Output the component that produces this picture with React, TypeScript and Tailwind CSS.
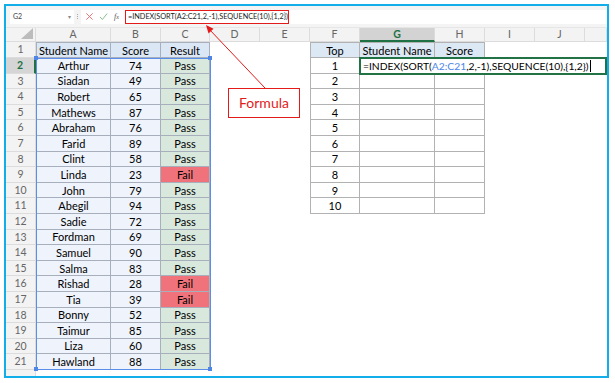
import React from "react";

const data: [string, number, string][] = [
  ["Arthur", 74, "Pass"],
  ["Siadan", 49, "Pass"],
  ["Robert", 65, "Pass"],
  ["Mathews", 87, "Pass"],
  ["Abraham", 76, "Pass"],
  ["Farid", 89, "Pass"],
  ["Clint", 58, "Pass"],
  ["Linda", 23, "Fail"],
  ["John", 79, "Pass"],
  ["Abegil", 94, "Pass"],
  ["Sadie", 72, "Pass"],
  ["Fordman", 69, "Pass"],
  ["Samuel", 90, "Pass"],
  ["Salma", 83, "Pass"],
  ["Rishad", 28, "Fail"],
  ["Tia", 39, "Fail"],
  ["Bonny", 52, "Pass"],
  ["Taimur", 85, "Pass"],
  ["Liza", 60, "Pass"],
  ["Hawland", 88, "Pass"],
];

const GRID =
  "grid grid-cols-[30px_75px_50px_49px_50px_50px_50px_75px_50px_50px_50px_1fr]";

const rh =
  "flex items-center justify-center bg-[#f3f3f3] text-[#666666] text-[10.5px] border-b border-r border-[#dcdcdc]";
const rhActive =
  "flex items-center justify-center bg-[#d5d5d5] text-[#1e7145] font-bold text-[10.5px] border-b border-b-[#dcdcdc] border-r-2 border-r-[#1e7145]";
const cellBase = "flex items-center justify-center text-black whitespace-nowrap overflow-hidden";
const tBodyA = `${cellBase} bg-[#eef3fc] border-l border-r border-b border-[#a7afbd]`;
const tBody = `${cellBase} bg-[#eef3fc] border-r border-b border-[#a7afbd]`;
const tHeadA = `${cellBase} bg-[#dbe7f5] border-l border-r border-b border-t border-[#a7afbd]`;
const tHead = `${cellBase} bg-[#dbe7f5] border-r border-b border-t border-[#a7afbd]`;
const tPass = `${cellBase} bg-[#d8e8dc] border-r border-b border-[#a7afbd]`;
const tFail = `${cellBase} bg-[#f0727a] border-r border-b border-[#a7afbd]`;
const fHeadF = `${cellBase} bg-[#dde8f5] border-l border-r border-b border-t border-[#b2b2b2]`;
const fHead = `${cellBase} bg-[#dde8f5] border-r border-b border-t border-[#b2b2b2]`;
const fBodyF = `${cellBase} bg-white border-l border-r border-b border-[#b2b2b2]`;
const fBody = `${cellBase} bg-white border-r border-b border-[#b2b2b2]`;

const colHeads = ["A", "B", "C", "D", "E", "F", "G", "H", "I", "J", ""];

export default function App() {
  return (
    <div
      className="relative w-[615px] h-[383px] bg-white overflow-hidden leading-none"
      style={{ fontFamily: "Lato, 'Liberation Sans', sans-serif" }}
    >
      <div className="ml-[4px] mt-[4px] w-[605px] h-[374px] border-2 border-[#12aee9] overflow-hidden flex flex-col">
        {/* Formula bar */}
        <div className="h-[21px] shrink-0 flex items-center bg-[#f4f4f4]">
          <div className="ml-[4px] w-[64px] h-[14px] bg-white flex items-center justify-between px-[3px] text-[7px] text-[#444444]">
            <span>G2</span>
            <span className="text-[6px] text-[#8a8a8a]">▾</span>
          </div>
          <div className="ml-[1px] w-[5px] h-[14px] flex flex-col items-center justify-center gap-[1px]">
            <span className="w-[1px] h-[1px] bg-[#aaaaaa]" />
            <span className="w-[1px] h-[1px] bg-[#aaaaaa]" />
            <span className="w-[1px] h-[1px] bg-[#aaaaaa]" />
          </div>
          <div className="ml-[1px] w-[43px] h-[14px] bg-white flex items-center pl-[4px] gap-[5px]">
            <svg width="9" height="9" viewBox="0 0 10 10">
              <path d="M1.5 1.5 L8.5 8.5 M8.5 1.5 L1.5 8.5" stroke="#e8696b" strokeWidth="1" fill="none" />
            </svg>
            <svg width="9" height="9" viewBox="0 0 10 10">
              <path d="M1 5.5 L3.8 8.3 L9 1.8" stroke="#7cb77f" strokeWidth="1" fill="none" />
            </svg>
            <span
              className="text-[8px] italic text-[#555555] ml-[1px]"
              style={{ fontFamily: "'Liberation Serif', serif" }}
            >
              f<span className="text-[6px]">x</span>
            </span>
          </div>
          <div className="flex-1 h-[14px] bg-white flex items-center">
            <div className="ml-[1px] w-[164px] h-[14px] border-[1.5px] border-[#e31a1a] flex items-center pl-[2px] text-[7.3px] text-[#222222] whitespace-nowrap overflow-hidden">
              =INDEX(SORT(A2:C21,2,-1),SEQUENCE(10),{"{"}1,2{"}"})
            </div>
          </div>
        </div>

        {/* Column headers */}
        <div className={`${GRID} h-[15px] shrink-0 bg-[#f3f3f3] border-t border-[#e6e6e6]`}>
          <div className="relative border-r border-b border-[#dcdcdc]">
            <svg className="absolute right-[2px] bottom-[2px]" width="12" height="11" viewBox="0 0 12 11">
              <polygon points="12,0 12,11 0,11" fill="#bcbcbc" />
            </svg>
          </div>
          {colHeads.map((c, i) =>
            c === "G" ? (
              <div
                key={i}
                className="flex items-center justify-center bg-[#d3d3d3] text-[#1e7145] font-bold text-[10.5px] border-r border-r-[#dcdcdc] border-b-2 border-b-[#1e7145]"
              >
                {c}
              </div>
            ) : (
              <div
                key={i}
                className="flex items-center justify-center text-[#666666] text-[10.5px] border-r border-b border-[#dcdcdc]"
              >
                {c}
              </div>
            )
          )}
        </div>

        {/* Row 1 */}
        <div className={`${GRID} h-[16px] shrink-0 text-[11px]`}>
          <div className={rh}>1</div>
          <div className={tHeadA}>Student Name</div>
          <div className={tHead}>Score</div>
          <div className={tHead}>Result</div>
          <div />
          <div />
          <div className={fHeadF}>Top</div>
          <div className={fHead}>Student Name</div>
          <div className={fHead}>Score</div>
          <div />
          <div />
          <div />
        </div>

        {/* Rows 2..21 */}
        {data.map(([name, score, res], i) => {
          const r = i + 2;
          const inTop = i < 10;
          return (
            <div key={r} className={`${GRID} h-[15.6px] shrink-0 text-[11px]`}>
              <div className={r === 2 ? rhActive : rh}>{r}</div>
              <div className={tBodyA}>{name}</div>
              <div className={tBody}>{score}</div>
              <div className={res === "Pass" ? tPass : tFail}>{res}</div>
              <div />
              <div />
              {inTop ? <div className={fBodyF}>{i + 1}</div> : <div />}
              {inTop ? <div className={fBody} /> : <div />}
              {inTop ? <div className={fBody} /> : <div />}
              <div />
              <div />
              <div />
            </div>
          );
        })}
        <div className={`${GRID} flex-1`}>
          <div className="bg-[#f3f3f3] border-r border-[#dcdcdc]" />
        </div>
      </div>

      {/* Reference range outline A2:C21 */}
      <div className="absolute left-[36px] top-[58px] w-[175px] h-[312px] border border-[#5b8ee8] pointer-events-none" />
      <div className="absolute left-[34px] top-[56px] w-[4px] h-[4px] bg-[#4f86e6]" />
      <div className="absolute left-[208px] top-[56px] w-[4px] h-[4px] bg-[#4f86e6]" />
      <div className="absolute left-[34px] top-[367px] w-[4px] h-[4px] bg-[#4f86e6]" />
      <div className="absolute left-[208px] top-[367px] w-[4px] h-[4px] bg-[#4f86e6]" />

      {/* Active cell in edit mode */}
      <div className="absolute left-[359px] top-[57px] w-[248px] h-[18px] border-2 border-[#217346] bg-white flex items-center pl-[2px] text-[10.3px] text-black whitespace-nowrap overflow-hidden">
        <span>=INDEX(SORT(</span>
        <span className="text-[#4a86e8]">A2:C21</span>
        <span>,2,-1),SEQUENCE(10),{"{"}1,2{"}"})</span>
        <span className="ml-[1px] w-[1px] h-[12px] bg-black" />
      </div>

      {/* Callout */}
      <svg className="absolute left-0 top-0 pointer-events-none" width="615" height="383">
        <line x1="265" y1="88" x2="209" y2="29" stroke="#e31a1a" strokeWidth="1" />
        <polygon points="206,25 208.5,33.5 213.5,28.8" fill="#e31a1a" />
      </svg>
      <div className="absolute left-[228px] top-[88px] w-[72px] h-[30px] border-[1.5px] border-[#e31a1a] bg-white flex items-center justify-center text-[14px] text-[#e31a1a]">
        Formula
      </div>
    </div>
  );
}
